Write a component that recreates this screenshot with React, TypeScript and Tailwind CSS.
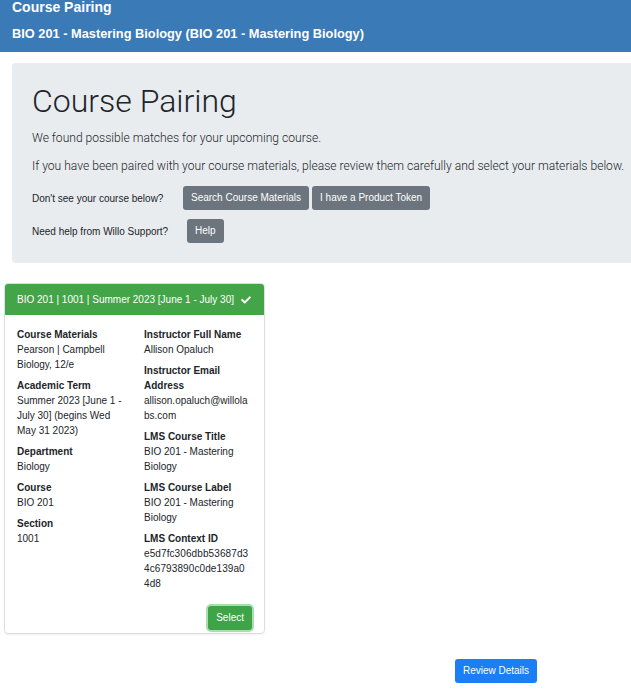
import React from 'react';

type Field = { label: string; value: string; breakAll?: boolean; spaced?: boolean };

const leftFields: Field[] = [
  { label: 'Course Materials', value: 'Pearson | Campbell Biology, 12/e' },
  { label: 'Academic Term', value: 'Summer 2023 [June 1 - July 30] (begins Wed May 31 2023)' },
  { label: 'Department', value: 'Biology' },
  { label: 'Course', value: 'BIO 201' },
  { label: 'Section', value: '1001' },
];

const rightFields: Field[] = [
  { label: 'Instructor Full Name', value: 'Allison Opaluch' },
  { label: 'Instructor Email Address', value: 'allison.opaluch@willolabs.com', breakAll: true },
  { label: 'LMS Course Title', value: 'BIO 201 - Mastering Biology' },
  { label: 'LMS Course Label', value: 'BIO 201 - Mastering Biology' },
  { label: 'LMS Context ID', value: 'e5d7fc306dbb53687d34c6793890c0de139a04d8', breakAll: true, spaced: true },
];

const FieldList: React.FC<{ fields: Field[] }> = ({ fields }) => (
  <div className="flex flex-col gap-[6px]">
    {fields.map(f => (
      <div key={f.label}>
        <div className="font-bold">{f.label}</div>
        <div className={`${f.breakAll ? 'break-all' : ''} ${f.spaced ? 'tracking-[0.1px]' : ''}`}>{f.value}</div>
      </div>
    ))}
  </div>
);

const CheckIcon = () => (
  // font-awesome style check
  <svg viewBox="0 0 512 512" className="w-[10px] h-[10px]" fill="white">
    <path d="M173.9 439.4l-166.4-166.4c-10-10-10-26.2 0-36.2l36.2-36.2c10-10 26.2-10 36.2 0L192 312.7 432.1 72.6c10-10 26.2-10 36.2 0l36.2 36.2c10 10 10 26.2 0 36.2L210.1 439.4c-10 10-26.2 10-36.2 0z" />
  </svg>
);

const btnGray =
  'bg-[#6c757d] text-white text-[10px] leading-[14px] px-[8px] py-[5px] rounded-[3px]';

export default function App() {
  return (
    <div className="w-full min-h-[694px] bg-white overflow-hidden text-[#212529] font-['Liberation_Sans',Arial,sans-serif]">
      {/* top bar */}
      <div className="bg-[#3a7ab7] text-white px-[12px] pb-[9px]">
        <div className="text-[14px] leading-[14px] font-bold">Course Pairing</div>
        <div className="mt-[11px] text-[12.8px] leading-[18px] font-bold">
          BIO 201 - Mastering Biology (BIO 201 - Mastering Biology)
        </div>
      </div>

      <div className="w-[992px]">
        {/* jumbotron */}
        <div className="ml-[12px] mt-[11px] bg-[#e9ecef] rounded-[4px] px-[20px] pt-[17px] pb-[20px]">
          <h1 className="font-['Roboto',sans-serif] font-light text-[32px] leading-[43px]">Course Pairing</h1>
          <p className="mt-[6px] font-['Roboto',sans-serif] font-light text-[12.1px] leading-[18px]">
            We found possible matches for your upcoming course.
          </p>
          <p className="mt-[10px] font-['Roboto',sans-serif] font-light text-[12.1px] leading-[18px]">
            If you have been paired with your course materials, please review them carefully and select your materials below.
          </p>
          <div className="mt-[11px] flex items-center">
            <span className="text-[10px] w-[151px]">Don't see your course below?</span>
            <div className="flex gap-[3px]">
              <button className={btnGray}>Search Course Materials</button>
              <button className={btnGray}>I have a Product Token</button>
            </div>
          </div>
          <div className="mt-[9px] flex items-center">
            <span className="text-[10px] w-[155px]">Need help from Willo Support?</span>
            <button className={btnGray}>Help</button>
          </div>
        </div>

        {/* match card */}
        <div className="ml-[4px] mt-[20px] w-[261px] border border-[#dcdfe2] rounded-[4px] shadow-[0_1px_2px_rgba(0,0,0,0.06)] overflow-hidden">
          <div className="h-[31px] bg-[#44a548] text-white text-[10px] flex items-center justify-between pl-[12px] pr-[13px]">
            <span>BIO 201 | 1001 | Summer 2023 [June 1 - July 30]</span>
            <CheckIcon />
          </div>
          <div className="pl-[12px] pr-[12px] pt-[12px] pb-[3px] text-[10px] leading-[15px]">
            <div className="grid grid-cols-[107px_105px] gap-x-[20px]">
              <FieldList fields={leftFields} />
              <FieldList fields={rightFields} />
            </div>
            <div className="flex justify-end mt-[15px]">
              <button className="bg-[#3fa348] text-white text-[10px] leading-[14px] px-[8px] py-[5px] rounded-[3px] shadow-[0_0_0_2px_rgba(110,200,125,0.6)]">
                Select
              </button>
            </div>
          </div>
        </div>

        <div className="flex justify-center mt-[25px]">
          <button className="bg-[#1a7ef5] text-white text-[10px] leading-[14px] px-[8px] py-[5px] rounded-[3px]">
            Review Details
          </button>
        </div>
      </div>
    </div>
  );
}
